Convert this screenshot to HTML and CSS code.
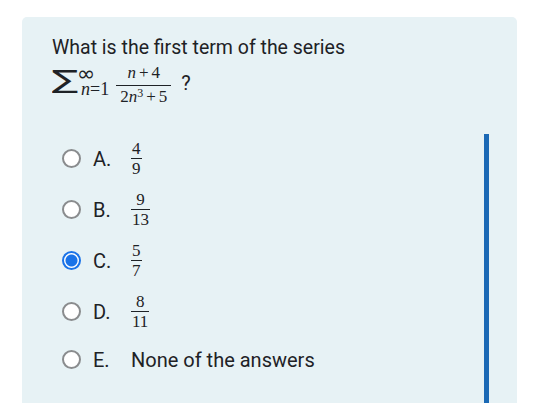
FILE: index.html
```html
<!DOCTYPE html>
<html>
<head>
<meta charset="utf-8">
<link rel="stylesheet" href="styles.css">
</head>
<body>
<div class="card">
  <div class="question">What is the first term of the series</div>
  <div class="mathline">
    <span class="sigma"><span class="sigma-glyph">∑</span></span>
    <span class="limits"><span class="sup">∞</span><span class="sub"><i>n</i>=1</span></span>
    <span class="frac big"><span class="num"><i>n</i><span class="bin">+</span>4</span><span class="den">2<i>n</i><sup>3</sup><span class="bin">+</span>5</span></span>
    <span class="qmark">?</span>
  </div>
  <ul class="options">
    <li class="opt"><span class="radio"></span><span class="letter">A.</span><span class="frac"><span class="num">4</span><span class="den">9</span></span></li>
    <li class="opt"><span class="radio"></span><span class="letter">B.</span><span class="frac"><span class="num">9</span><span class="den">13</span></span></li>
    <li class="opt"><span class="radio checked"></span><span class="letter">C.</span><span class="frac"><span class="num">5</span><span class="den">7</span></span></li>
    <li class="opt"><span class="radio"></span><span class="letter">D.</span><span class="frac"><span class="num">8</span><span class="den">11</span></span></li>
    <li class="opt last"><span class="radio"></span><span class="letter">E.</span><span class="text">None of the answers</span></li>
  </ul>
  <div class="bar"></div>
</div>
</body>
</html>
```
FILE: styles.css
```css
html, body {
  margin: 0;
  padding: 0;
  background: #ffffff;
}
body {
  padding: 17px 23px 0 22px;
  font-family: Roboto, "Liberation Sans", sans-serif;
  color: #1e2226;
  height: 403px;
  box-sizing: border-box;
  overflow: hidden;
}
.card {
  position: relative;
  background: #e7f2f5;
  border-radius: 5px 5px 0 0;
  height: 400px;
  padding: 18px 0 0 30px;
  box-sizing: border-box;
}
.question {
  font-size: 19.5px;
  line-height: 26px;
}
.mathline {
  display: flex;
  align-items: flex-start;
  height: 50px;
  font-family: "Liberation Serif", "DejaVu Serif", serif;
}
.sigma {
  display: block;
  width: 24px;
  height: 30px;
  flex: none;
  overflow: visible;
}
.sigma-glyph {
  display: inline-block;
  font-family: "DejaVu Sans", sans-serif;
  font-size: 27px;
  line-height: 26px;
  margin-top: 7px;
  transform: scale(1.45, 0.92);
  transform-origin: left top;
}
.limits {
  display: flex;
  flex-direction: column;
  margin-left: 1px;
}
.sup {
  font-family: "DejaVu Sans", sans-serif;
  font-size: 22px;
  line-height: 12px;
  margin-top: 7px;
  margin-left: 0;
}
.sub {
  font-size: 18px;
  line-height: 13px;
  margin-top: 3px;
  margin-left: 4px;
}
.frac {
  display: inline-flex;
  flex-direction: column;
  align-items: center;
  font-family: "Liberation Serif", "DejaVu Serif", serif;
  font-size: 17px;
  line-height: 15px;
}
.frac .num {
  padding: 0 1px 2px;
  border-bottom: 1px solid #1e2226;
  min-width: 10px;
  text-align: center;
  width: 100%;
  box-sizing: border-box;
}
.frac .den {
  padding-top: 2px;
  padding-left: 1px;
  padding-right: 1px;
}
.frac.big {
  font-size: 17px;
  line-height: 14px;
  margin-left: 7px;
  margin-top: 5px;
}
.frac.big .num {
  padding: 0 3px 5px;
}
.frac.big .den {
  padding: 4px 4px 0;
}
.frac.big sup {
  font-size: 12px;
  line-height: 0;
  vertical-align: 5px;
}
.bin {
  margin: 0 3px;
}
.qmark {
  font-family: Roboto, "Liberation Sans", sans-serif;
  font-size: 20px;
  line-height: 22px;
  margin-left: 10px;
  margin-top: 11px;
}
.options {
  list-style: none;
  margin: 0;
  padding: 22px 0 0 0;
}
.opt {
  display: flex;
  align-items: center;
  height: 51px;
  font-size: 20px;
}
.opt.last {
  height: 45px;
}
.radio {
  width: 19px;
  height: 19px;
  box-sizing: border-box;
  border: 2px solid #8a8c8e;
  border-radius: 50%;
  background: #ffffff;
  margin-left: 10px;
  flex: none;
}
.radio.checked {
  border-color: #1a73e8;
  background: radial-gradient(circle, #1a73e8 0 5.5px, #ffffff 6.5px);
}
.letter {
  margin-left: 12px;
  width: 38px;
}
.text {
  font-size: 20px;
}
.bar {
  position: absolute;
  left: 462px;
  top: 117px;
  width: 5px;
  bottom: 0;
  background: #1b69b5;
}
```
